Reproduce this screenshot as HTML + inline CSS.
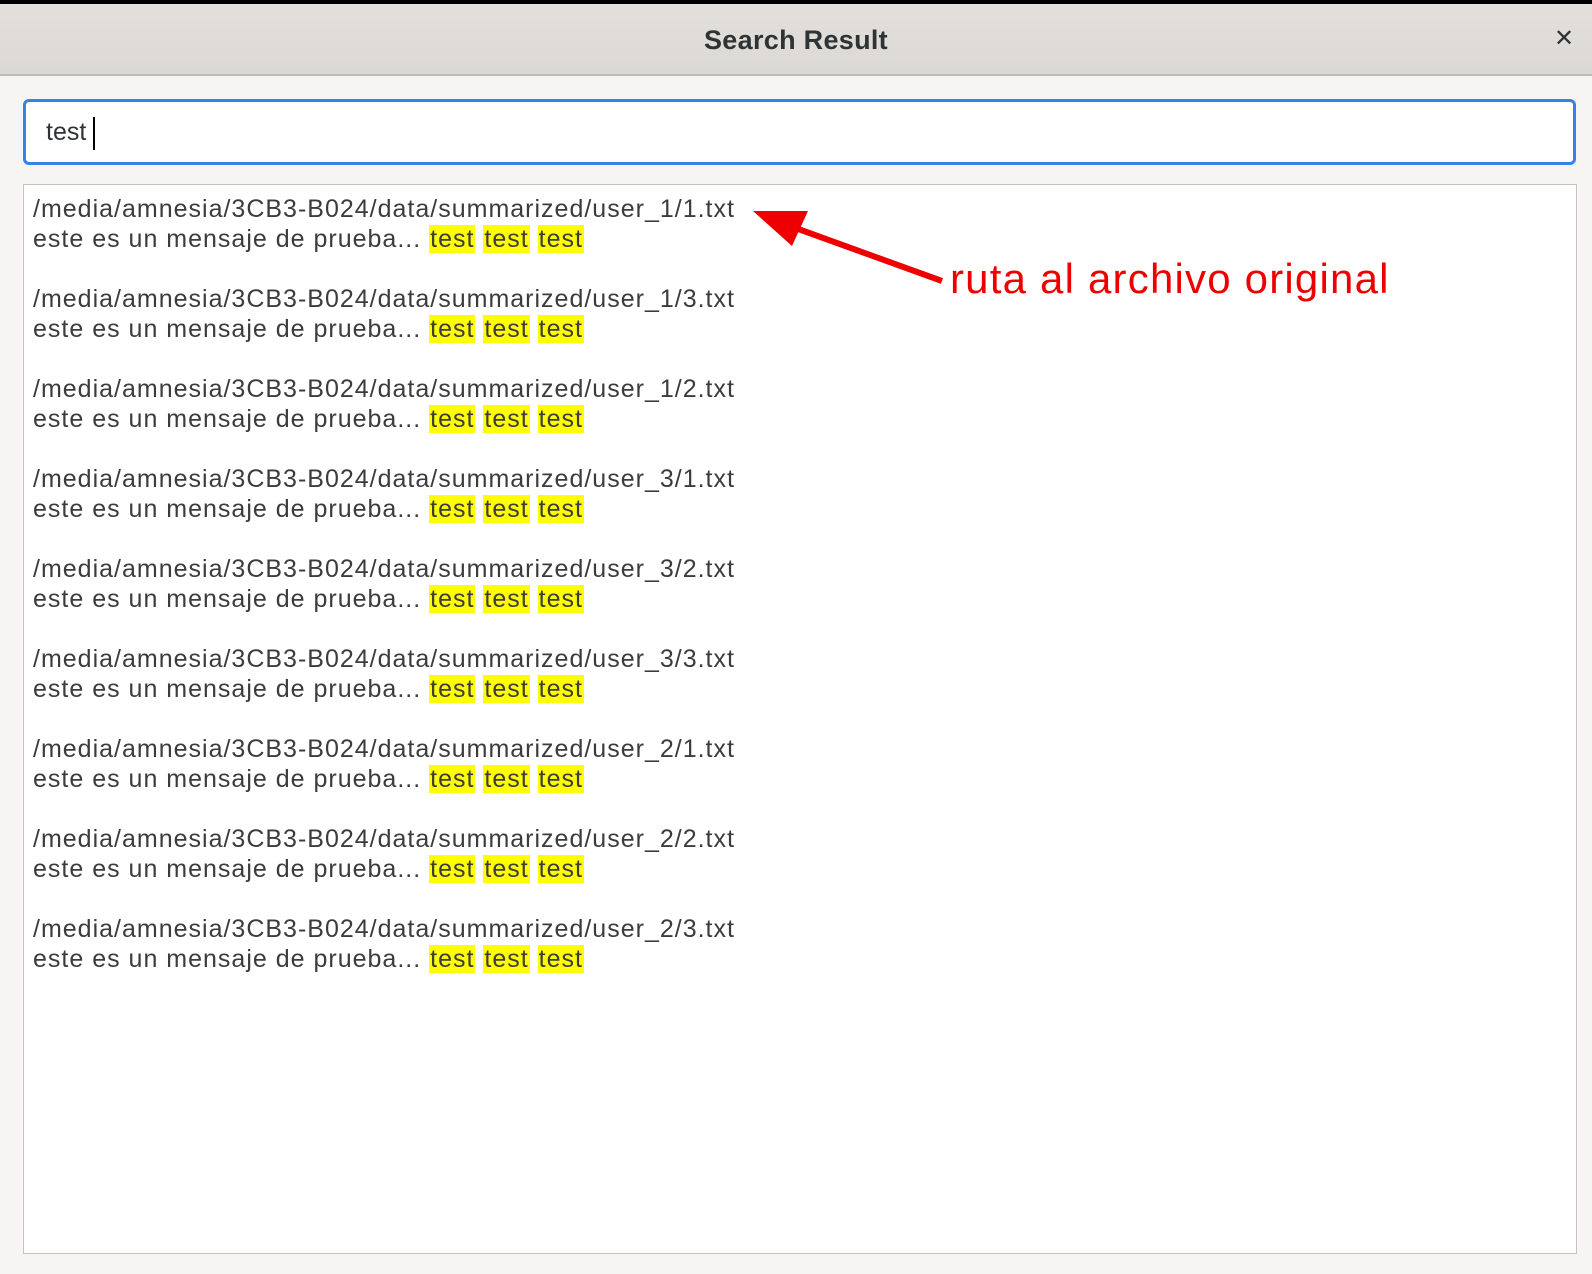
<!DOCTYPE html>
<html><head><meta charset="utf-8"><style>
body{margin:0;width:1592px;height:1274px;background:#f6f5f4;position:relative;overflow:hidden;font-family:"Liberation Sans","DejaVu Sans",sans-serif;}
.top{position:absolute;left:0;top:0;width:1592px;height:4px;background:#000}
.title{position:absolute;left:0;top:4px;width:1592px;height:70px;background:linear-gradient(#e3e0dc,#dcd8d3);border-bottom:2px solid #c0bab4;}
.title .t{position:absolute;left:0;right:0;top:21px;text-align:center;font-weight:bold;font-size:27px;color:#2e3436;letter-spacing:0.3px}
.x{position:absolute;left:1554px;top:20px;font-size:24px;font-weight:bold;color:#2e3436}
.inp{position:absolute;left:23px;top:99px;width:1547px;height:60px;border:3px solid #3584e4;border-radius:6px;background:#fff}
.inp span{position:absolute;left:20px;top:16px;font-size:25px;color:#2e3436}
.inp i{position:absolute;left:67px;top:15px;width:2px;height:33px;background:#000}
.list{position:absolute;left:23px;top:184px;width:1552px;height:1068px;border:1px solid #c6c2bd;background:#fff}
.r{position:absolute;left:9px;font-size:25px;letter-spacing:1px;color:#3c3c3c;line-height:30px;white-space:nowrap}
.h{background:#ffff00;padding:0 1px}
.ann{position:absolute;left:950px;top:255px;font-size:42px;letter-spacing:1.2px;color:#ee0000}
</style></head><body>
<div class="top"></div>
<div class="title"><div class="t">Search Result</div><div class="x">✕</div></div>
<div class="inp"><span>test</span><i></i></div>
<div class="list">
<div class="r" style="top:9px">/media/amnesia/3CB3-B024/data/summarized/user_1/1.txt<br>este es un mensaje de prueba... <span class="h">test</span> <span class="h">test</span> <span class="h">test</span></div>
<div class="r" style="top:99px">/media/amnesia/3CB3-B024/data/summarized/user_1/3.txt<br>este es un mensaje de prueba... <span class="h">test</span> <span class="h">test</span> <span class="h">test</span></div>
<div class="r" style="top:189px">/media/amnesia/3CB3-B024/data/summarized/user_1/2.txt<br>este es un mensaje de prueba... <span class="h">test</span> <span class="h">test</span> <span class="h">test</span></div>
<div class="r" style="top:279px">/media/amnesia/3CB3-B024/data/summarized/user_3/1.txt<br>este es un mensaje de prueba... <span class="h">test</span> <span class="h">test</span> <span class="h">test</span></div>
<div class="r" style="top:369px">/media/amnesia/3CB3-B024/data/summarized/user_3/2.txt<br>este es un mensaje de prueba... <span class="h">test</span> <span class="h">test</span> <span class="h">test</span></div>
<div class="r" style="top:459px">/media/amnesia/3CB3-B024/data/summarized/user_3/3.txt<br>este es un mensaje de prueba... <span class="h">test</span> <span class="h">test</span> <span class="h">test</span></div>
<div class="r" style="top:549px">/media/amnesia/3CB3-B024/data/summarized/user_2/1.txt<br>este es un mensaje de prueba... <span class="h">test</span> <span class="h">test</span> <span class="h">test</span></div>
<div class="r" style="top:639px">/media/amnesia/3CB3-B024/data/summarized/user_2/2.txt<br>este es un mensaje de prueba... <span class="h">test</span> <span class="h">test</span> <span class="h">test</span></div>
<div class="r" style="top:729px">/media/amnesia/3CB3-B024/data/summarized/user_2/3.txt<br>este es un mensaje de prueba... <span class="h">test</span> <span class="h">test</span> <span class="h">test</span></div>
</div>
<svg style="position:absolute;left:0;top:0" width="1592" height="1274">
<line x1="942" y1="281" x2="790" y2="226" stroke="#ee0000" stroke-width="6"/>
<polygon points="753,211 808,211 792,246" fill="#ee0000"/>
</svg>
<div class="ann">ruta al archivo original</div>
</body></html>
